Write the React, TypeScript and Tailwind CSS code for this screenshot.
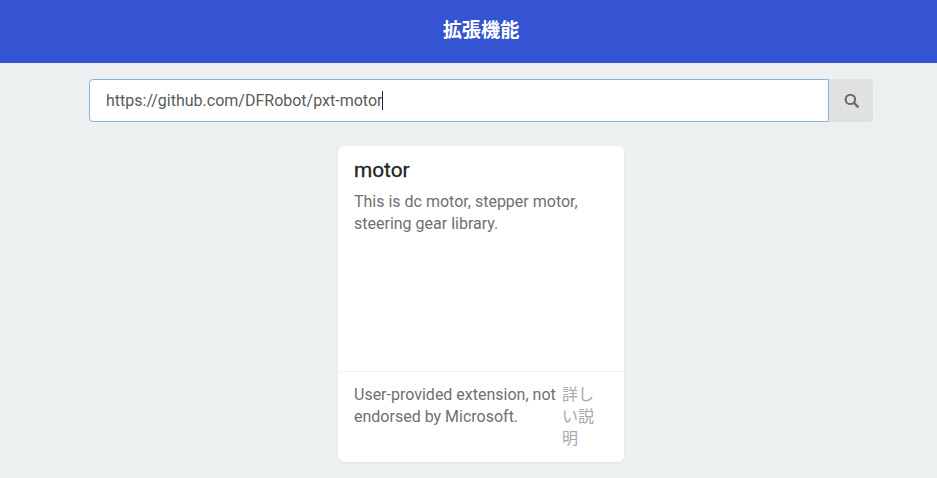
const ROBOTO = "font-['Roboto','Noto_Sans_CJK_JP',sans-serif]";

export default function App() {
  return (
    <div className={`h-[478px] w-[937px] overflow-hidden bg-[#ecf0f1] ${ROBOTO}`}>
      {/* Header */}
      <div className="flex h-[63px] items-center justify-center bg-[#3454d1] pl-[25px]">
        <h1 className="text-[19.2px] font-bold text-white">拡張機能</h1>
      </div>

      {/* Search */}
      <div className="mt-4 flex justify-center pl-[25px]">
        <div className="flex h-[43px] w-[784px]">
          <div className="flex w-[740px] items-center rounded-l border border-[#85b7d9] bg-white pl-4 text-base text-[#5a5a5a]">
            <span>https://github.com/DFRobot/pxt-motor</span>
            <span className="h-[19px] w-px bg-[#222222]" />
          </div>
          <button className="flex w-[44px] items-center justify-center rounded-r bg-[#e0e1e2]">
            <svg viewBox="0 0 16 16" className="h-[15px] w-[15px]" fill="none" stroke="#6b6b6b">
              <circle cx="6.8" cy="6.8" r="5" strokeWidth="2.2" />
              <path d="M10.6 10.6 14.6 14.6" strokeWidth="2.6" strokeLinecap="round" />
            </svg>
          </button>
        </div>
      </div>

      {/* Card */}
      <div className="mt-6 flex justify-center pl-[25px]">
        <div className="flex h-[316px] w-[286px] flex-col rounded-md bg-white shadow-[0_1px_2px_rgba(34,36,38,0.08)]">
          <div className="flex-1 px-4 pt-3">
            <div className="text-[20.8px] leading-6 font-normal text-[#1f1f1f] [-webkit-text-stroke:0.3px_#1f1f1f]">motor</div>
            <p className="mt-[9px] text-base leading-[22px] text-[#6f6f6f]">
              This is dc motor, stepper motor, steering gear library.
            </p>
          </div>
          <div className="flex h-[91px] gap-1 border-t border-[#f0f1f2] pt-[12px] pl-4 text-base leading-[22px]">
            <div className="w-[204px] shrink-0 text-[#6f6f6f]">
              User-provided extension, not endorsed by Microsoft.
            </div>
            <div className="w-[38px] text-[#a8a8a8]">詳しい説明</div>
          </div>
        </div>
      </div>
    </div>
  );
}
